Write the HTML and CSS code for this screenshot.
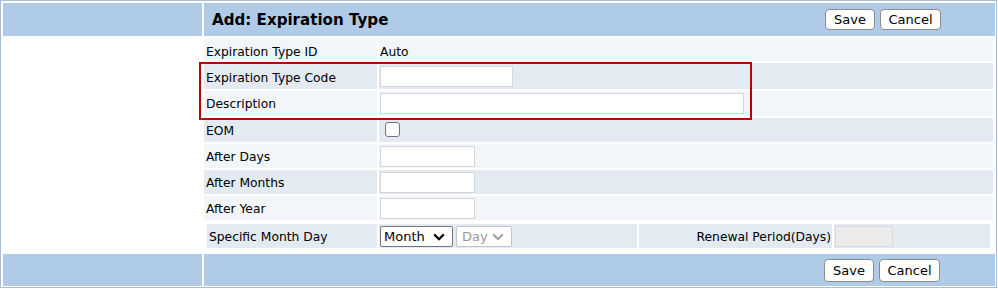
FILE: index.html
```html
<!DOCTYPE html>
<html lang="en">
<head>
<meta charset="utf-8">
<title>Add: Expiration Type</title>
<link rel="stylesheet" href="styles.css">
</head>
<body>
<div class="frame">
  <div class="bar-side"></div>
  <div class="bar-main head">
    <h1 class="title">Add: Expiration Type</h1>
    <div class="actions">
      <button class="btn btn-save" type="button">Save</button>
      <button class="btn btn-cancel" type="button">Cancel</button>
    </div>
  </div>

  <div class="side"></div>
  <div class="form">
    <div class="row light h22 first"><div class="label">Expiration Type ID</div><div class="value">Auto</div></div>
    <div class="row dark h26"><div class="label">Expiration Type Code</div><div class="value"><input class="field w-code" type="text"></div></div>
    <div class="row light h25"><div class="label">Description</div><div class="value"><input class="field w-desc" type="text"></div></div>
    <div class="row dark h24"><div class="label">EOM</div><div class="value"><input class="check" type="checkbox"></div></div>
    <div class="row light h24"><div class="label">After Days</div><div class="value"><input class="field w-num" type="text"></div></div>
    <div class="row dark h24"><div class="label">After Months</div><div class="value"><input class="field w-num" type="text"></div></div>
    <div class="row light h24"><div class="label">After Year</div><div class="value"><input class="field w-num" type="text"></div></div>

    <div class="sub-row">
      <div class="cell label">Specific Month Day</div>
      <div class="cell selects">
        <span class="sel sel-month">
          <span class="sel-text">Month</span>
          <svg class="chev" width="12" height="8" viewBox="0 0 12 8"><path d="M1.2 1.4 L6 6.2 L10.8 1.4" fill="none" stroke="#000" stroke-width="2.2"/></svg>
        </span>
        <span class="sel sel-day">
          <span class="sel-text">Day</span>
          <svg class="chev" width="12" height="8" viewBox="0 0 12 8"><path d="M1.2 1.4 L6 6.2 L10.8 1.4" fill="none" stroke="#9a9a9a" stroke-width="2"/></svg>
        </span>
      </div>
      <div class="cell renew-label">Renewal Period(Days)</div>
      <div class="cell renew-value"><input class="field w-renew" type="text" disabled></div>
    </div>

    <div class="highlight"></div>
  </div>

  <div class="bar-side"></div>
  <div class="bar-main foot">
    <div class="actions">
      <button class="btn btn-save" type="button">Save</button>
      <button class="btn btn-cancel" type="button">Cancel</button>
    </div>
  </div>
</div>
</body>
</html>
```

FILE: styles.css
```css
html, body {
  margin: 0;
  padding: 0;
  background: #ffffff;
}

body {
  font-family: "DejaVu Sans", Verdana, sans-serif;
  font-size: 12.3px;
  color: #000;
}

.frame {
  width: 997px;
  height: 288px;
  box-sizing: border-box;
  border: 1px solid #a9bdd8;
  padding: 2px 1px 1px 2px;
  display: grid;
  grid-template-columns: 199px 791px;
  grid-template-rows: 33px 214px 32px;
  column-gap: 2px;
  row-gap: 2px;
}

.bar-side,
.bar-main {
  background: #b0cbe7;
}

.bar-main {
  display: flex;
  align-items: center;
}

.head {
  justify-content: space-between;
  padding: 0 54px 0 8px;
}

.foot {
  justify-content: flex-end;
  padding: 0 55px 0 0;
}

.title {
  margin: 0;
  font-size: 15.1px;
  font-weight: bold;
  color: #000;
}

.actions {
  display: flex;
  gap: 5px;
}

.btn {
  height: 21px;
  box-sizing: border-box;
  padding: 0;
  background: #fff;
  border: 1px solid #8c8c8c;
  border-radius: 4px;
  font-family: "DejaVu Sans", Verdana, sans-serif;
  font-size: 13px;
  color: #000;
  line-height: 19px;
}

.foot .btn {
  height: 23px;
}

.btn-save { width: 50px; }
.btn-cancel { width: 61px; }

.side {
  background: #fff;
}

.form {
  position: relative;
  padding: 1px 2px 0 0;
  display: flex;
  flex-direction: column;
  gap: 2px;
}

.row {
  display: grid;
  grid-template-columns: 173px 1fr;
  column-gap: 2px;
}

.h22 { height: 22px; }
.h24 { height: 24px; }
.h25 { height: 25px; }
.h26 { height: 26px; }

.row.light > div { background: #f2f6fa; }
.row.dark > div { background: #e4eaf2; }

.label {
  display: flex;
  align-items: center;
  padding-left: 2px;
  padding-top: 1px;
}

.value {
  display: flex;
  align-items: center;
  padding-left: 1px;
}

.row.first > div {
  padding-top: 3px;
}

.row.h26 > .label {
  padding-top: 3px;
}

.field {
  box-sizing: border-box;
  height: 21px;
  margin: 0;
  padding: 0 3px;
  border: 1px solid #d6d6d6;
  background: #fff;
  font-family: "DejaVu Sans", Verdana, sans-serif;
  font-size: 12.3px;
  outline: none;
}

.w-code { width: 133px; }
.w-desc { width: 364px; }
.w-num { width: 95px; }
.w-renew {
  width: 58px;
  background: #ebebeb;
  border-color: #d8d8d8;
}

.check {
  appearance: none;
  -webkit-appearance: none;
  width: 15px;
  height: 15px;
  margin: 0 0 1px 5px;
  box-sizing: border-box;
  border: 1px solid #767676;
  border-radius: 3px;
  background: #fff;
}

.sub-row {
  margin: 2px 3px 0 3px;
  height: 24px;
  display: grid;
  grid-template-columns: 170px 258px 193px 156px;
  column-gap: 2px;
}

.sub-row .cell {
  background: #e4eaf2;
  display: flex;
  align-items: center;
}

.sub-row .label {
  padding-left: 2px;
}

.selects {
  padding-left: 1px;
  gap: 3px;
}

.sel {
  position: relative;
  display: flex;
  align-items: center;
  box-sizing: border-box;
  height: 21px;
  border: 1px solid #767676;
  border-radius: 2px;
  background: #fff;
  font-size: 13px;
  padding-left: 3px;
}

.sel-month { width: 73px; }

.sel-day {
  width: 56px;
  border-color: #c4c4c4;
  color: #9a9a9a;
  padding-left: 5px;
}

.chev {
  position: absolute;
  right: 7px;
  top: 6px;
}

.renew-label {
  justify-content: flex-end;
  padding-right: 1px;
  padding-top: 1px;
}

.renew-value {
  padding-left: 1px;
}

.highlight {
  position: absolute;
  left: -5px;
  top: 24px;
  width: 553px;
  height: 58px;
  box-sizing: border-box;
  border: 2px solid #c00000;
  pointer-events: none;
}
```
